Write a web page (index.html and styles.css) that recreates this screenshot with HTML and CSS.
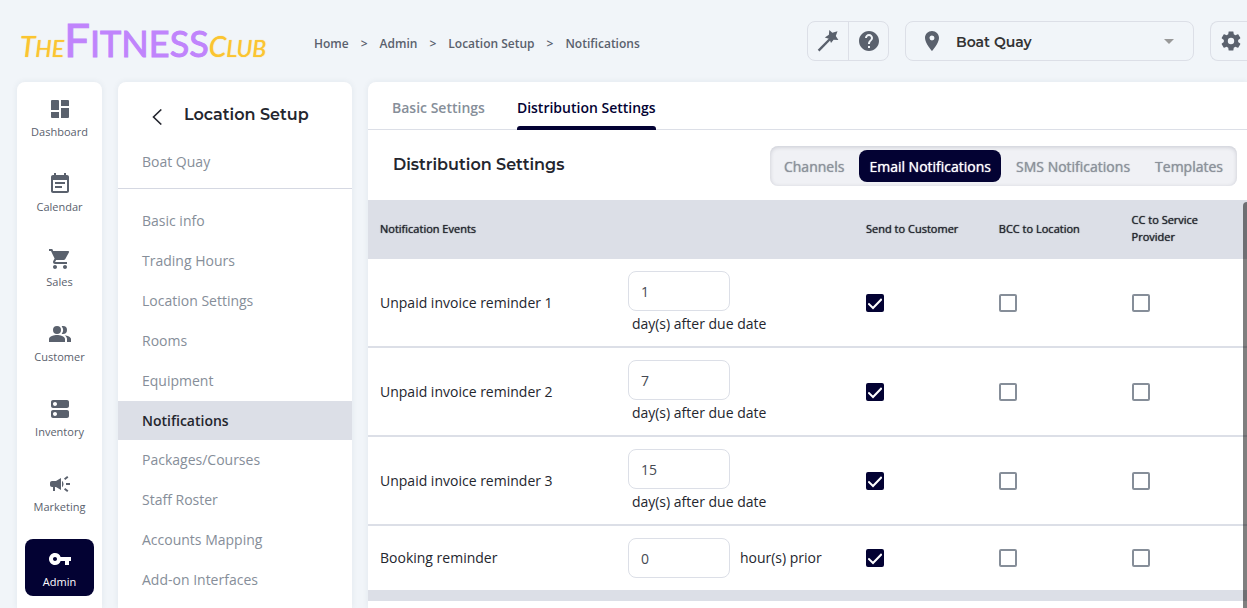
FILE: index.html
```html
<!DOCTYPE html>
<html lang="en">
<head>
<meta charset="utf-8">
<meta name="viewport" content="width=device-width, initial-scale=1">
<title>Distribution Settings</title>
<link rel="stylesheet" href="styles.css">
</head>
<body>
<header class="topbar">
  <a class="logo" href="#" aria-label="The Fitness Club"><i><span class="cap">T</span>HE</i><b><span class="cap">F</span>ITNESS</b><i><span class="cap">C</span>LUB</i></a>
  <nav class="crumbs" aria-label="Breadcrumb">
    <a href="#">Home</a><span>&gt;</span><a href="#">Admin</a><span>&gt;</span><a href="#">Location Setup</a><span>&gt;</span><a href="#">Notifications</a>
  </nav>
  <div class="tools">
    <div class="tool-group">
      <button type="button" aria-label="Quick setup"><svg width="22" height="22" viewBox="0 0 22 22"><path d="M1.600 20.600 13 9" stroke="currentColor" stroke-width="2.400"/><path d="m12.300 0 3 2.700 5.200-1.500-1.700 4.800 2.600 3.900-4.800-.1-2.600 3.200-1.500-4-4.700-1.500 4.100-2.700z" fill="currentColor"/></svg></button>
      <button type="button" aria-label="Help"><svg width="24" height="24" viewBox="0 0 24 24"><path fill="currentColor" d="M12 2C6.480 2 2 6.480 2 12s4.480 10 10 10 10-4.480 10-10S17.520 2 12 2zm1 17h-2v-2h2v2zm2.070-7.750-.9.920C13.450 12.900 13 13.500 13 15h-2v-.5c0-1.100.45-2.100 1.170-2.830l1.240-1.260c.37-.36.59-.86.59-1.410 0-1.100-.9-2-2-2s-2 .9-2 2H8c0-2.210 1.790-4 4-4s4 1.790 4 4c0 .88-.36 1.680-.93 2.250z"/></svg></button>
    </div>
    <label class="location">
      <svg width="24" height="24" viewBox="0 0 24 24"><path fill="currentColor" d="M12 2C8.130 2 5 5.130 5 9c0 5.250 7 13 7 13s7-7.750 7-13c0-3.870-3.130-7-7-7zm0 9.500a2.500 2.500 0 0 1 0-5 2.500 2.500 0 0 1 0 5z"/></svg>
      <select aria-label="Location"><option>Boat Quay</option></select>
      <svg class="caret" width="10" height="5" viewBox="0 0 10 5"><path fill="currentColor" d="M0 0h10L5 5z"/></svg>
    </label>
    <button type="button" class="gear" aria-label="Settings"><svg width="24" height="24" viewBox="0 0 24 24"><path fill="currentColor" d="M19.140 12.940c.04-.3.060-.61.060-.94 0-.32-.02-.64-.07-.94l2.030-1.580c.18-.14.23-.41.12-.61l-1.920-3.320c-.12-.22-.37-.29-.59-.22l-2.390.96c-.5-.38-1.030-.7-1.620-.94L14.400 2.810c-.04-.24-.24-.41-.48-.41h-3.840c-.24 0-.43.17-.47.41L9.250 5.350c-.59.24-1.130.57-1.620.94L5.240 5.330c-.22-.08-.47 0-.59.22L2.740 8.870c-.12.21-.08.47.12.61l2.030 1.580c-.05.3-.09.63-.09.94s.02.64.07.94l-2.030 1.580c-.18.14-.23.41-.12.61l1.920 3.320c.12.22.37.29.59.22l2.390-.96c.5.38 1.030.7 1.620.94l.36 2.540c.05.24.24.41.48.41h3.840c.24 0 .44-.17.47-.41l.36-2.540c.59-.24 1.130-.56 1.620-.94l2.390.96c.22.08.47 0 .59-.22l1.920-3.320c.12-.22.070-.47-.12-.61l-2.010-1.580zM12 15.200a3.200 3.200 0 1 1 0-6.400 3.200 3.200 0 0 1 0 6.400z"/></svg></button>
  </div>
</header>

<div class="layout">
  <nav class="rail" aria-label="Main">
    <a href="#"><svg viewBox="0 0 24 24"><path d="M4 3h6a1 1 0 0 1 1 1v9H3V4a1 1 0 0 1 1-1zM3 15h8v6H4a1 1 0 0 1-1-1zM13 11h8v9a1 1 0 0 1-1 1h-7zM13 3h7a1 1 0 0 1 1 1v5h-8z"/></svg>Dashboard</a>
    <a href="#"><svg viewBox="0 0 24 24"><path d="M17 10H7v2h10v-2zm2-7h-1V1h-2v2H8V1H6v2H5c-1.110 0-1.990.9-1.990 2L3 19c0 1.100.89 2 2 2h14c1.100 0 2-.9 2-2V5c0-1.100-.9-2-2-2zm0 16H5V8h14v11zm-5-5H7v2h7v-2z"/></svg>Calendar</a>
    <a href="#"><svg viewBox="0 0 24 24"><path d="M7 18c-1.100 0-1.990.9-1.990 2S5.900 22 7 22s2-.9 2-2-.9-2-2-2zM1 2v2h2l3.600 7.590-1.350 2.450c-.16.28-.25.610-.25.960 0 1.100.9 2 2 2h12v-2H7.420c-.14 0-.25-.11-.25-.25l.03-.12.9-1.630h7.450c.75 0 1.410-.41 1.750-1.030l3.580-6.490A1 1 0 0 0 20 4H5.210l-.94-2H1zm16 16c-1.100 0-1.990.9-1.990 2s.89 2 1.990 2 2-.9 2-2-.9-2-2-2z"/></svg>Sales</a>
    <a href="#"><svg viewBox="0 0 24 24"><path d="M16.670 13.130C18.040 14.060 19 15.320 19 17v3h4v-3c0-2.180-3.570-3.470-6.330-3.870zM9 4a4 4 0 1 1 0 8 4 4 0 0 1 0-8zM15 12a4 4 0 0 0 0-8c-.47 0-.91.1-1.330.24a5.980 5.980 0 0 1 0 7.520c.42.14.86.24 1.330.24zM9 13c-2.670 0-8 1.340-8 4v3h16v-3c0-2.660-5.330-4-8-4z"/></svg>Customer</a>
    <a href="#"><svg viewBox="0 0 24 24"><path d="M19 13H5c-1.100 0-2 .9-2 2v4c0 1.100.9 2 2 2h14c1.100 0 2-.9 2-2v-4c0-1.100-.9-2-2-2zM7 19c-1.100 0-2-.9-2-2s.9-2 2-2 2 .9 2 2-.9 2-2 2zM19 3H5c-1.100 0-2 .9-2 2v4c0 1.100.9 2 2 2h14c1.100 0 2-.9 2-2V5c0-1.100-.9-2-2-2zM7 9c-1.100 0-2-.9-2-2s.9-2 2-2 2 .9 2 2-.9 2-2 2z"/></svg>Inventory</a>
    <a href="#"><svg viewBox="0 0 24 24"><path d="M18 11v2h4v-2h-4zm-2 6.610c.96.71 2.210 1.650 3.200 2.390.4-.53.8-1.070 1.200-1.600-.99-.74-2.240-1.680-3.200-2.400-.4.540-.8 1.080-1.200 1.610zM20.400 5.600c-.4-.53-.8-1.070-1.200-1.600-.99.74-2.240 1.680-3.200 2.400.4.530.8 1.070 1.200 1.600.96-.72 2.210-1.650 3.200-2.400zM4 9c-1.100 0-2 .9-2 2v2c0 1.100.9 2 2 2h1v4h2v-4h1l5 3V6L8 9H4zm11.500 3c0-1.330-.58-2.530-1.500-3.350v6.690c.92-.81 1.500-2.010 1.500-3.340z"/></svg>Marketing</a>
    <a href="#" class="active" aria-current="page"><svg viewBox="0 0 24 24"><path d="M12.650 10A5.990 5.990 0 0 0 7 6c-3.310 0-6 2.690-6 6s2.690 6 6 6a5.990 5.990 0 0 0 5.650-4H17v4h4v-4h2v-4H12.650zM7 14c-1.100 0-2-.9-2-2s.9-2 2-2 2 .9 2 2-.9 2-2 2z"/></svg>Admin</a>
  </nav>

  <aside class="side">
    <div class="side-head">
      <a class="back" href="#" aria-label="Back"><svg width="10" height="16" viewBox="0 0 10 16"><path d="M9.300.5 1.500 8l7.800 7.500" fill="none" stroke="currentColor" stroke-width="1.600"/></svg></a>
      <h2>Location Setup</h2>
      <p>Boat Quay</p>
    </div>
    <nav class="side-nav" aria-label="Location Setup">
      <a href="#">Basic info</a>
      <a href="#">Trading Hours</a>
      <a href="#">Location Settings</a>
      <a href="#">Rooms</a>
      <a href="#">Equipment</a>
      <a href="#" class="active" aria-current="page">Notifications</a>
      <a href="#">Packages/Courses</a>
      <a href="#">Staff Roster</a>
      <a href="#">Accounts Mapping</a>
      <a href="#">Add-on Interfaces</a>
    </nav>
  </aside>

  <main class="panel">
    <nav class="tabs" aria-label="Settings">
      <a href="#">Basic Settings</a>
      <a href="#" class="active" aria-current="page">Distribution Settings</a>
    </nav>
    <div class="panel-head">
      <h1>Distribution Settings</h1>
      <div class="segments">
        <button type="button">Channels</button>
        <button type="button" class="active">Email Notifications</button>
        <button type="button">SMS Notifications</button>
        <button type="button">Templates</button>
      </div>
    </div>
    <div class="scroller">
      <table>
        <colgroup><col class="c-event"><col class="c-timing"><col class="c-check"><col class="c-check"><col></colgroup>
        <thead>
          <tr><th scope="col" colspan="2">Notification Events</th><th scope="col">Send to Customer</th><th scope="col">BCC to Location</th><th scope="col"><span class="narrow">CC to Service Provider</span></th></tr>
        </thead>
        <tbody>
          <tr>
            <td>Unpaid invoice reminder 1</td>
            <td><label class="timing stacked"><input type="text" value="1"><span>day(s) after due date</span></label></td>
            <td><input type="checkbox" aria-label="Send to Customer" checked></td>
            <td><input type="checkbox" aria-label="BCC to Location"></td>
            <td><input type="checkbox" aria-label="CC to Service Provider"></td>
          </tr>
          <tr>
            <td>Unpaid invoice reminder 2</td>
            <td><label class="timing stacked"><input type="text" value="7"><span>day(s) after due date</span></label></td>
            <td><input type="checkbox" aria-label="Send to Customer" checked></td>
            <td><input type="checkbox" aria-label="BCC to Location"></td>
            <td><input type="checkbox" aria-label="CC to Service Provider"></td>
          </tr>
          <tr>
            <td>Unpaid invoice reminder 3</td>
            <td><label class="timing stacked"><input type="text" value="15"><span>day(s) after due date</span></label></td>
            <td><input type="checkbox" aria-label="Send to Customer" checked></td>
            <td><input type="checkbox" aria-label="BCC to Location"></td>
            <td><input type="checkbox" aria-label="CC to Service Provider"></td>
          </tr>
          <tr class="group-end">
            <td>Booking reminder</td>
            <td><label class="timing"><input type="text" value="0"><span>hour(s) prior</span></label></td>
            <td><input type="checkbox" aria-label="Send to Customer" checked></td>
            <td><input type="checkbox" aria-label="BCC to Location"></td>
            <td><input type="checkbox" aria-label="CC to Service Provider"></td>
          </tr>
        </tbody>
      </table>
      <div class="thumb"></div>
    </div>
  </main>
</div>
</body>
</html>
```

FILE: styles.css
```css
:root {
  --navy: #030233;
  --ink: #24262e;
  --slate: #5a616d;
  --muted: #868e99;
  --line: #dcdfe7;
}

* { box-sizing: border-box; }

body {
  display: flex;
  flex-direction: column;
  height: 100vh;
  margin: 0;
  overflow: hidden;
  background: #f1f5f9;
  color: var(--ink);
  font: 14px/20px "Open Sans", sans-serif;
}

a { color: inherit; text-decoration: none; }
h1, h2, p { margin: 0; }
h1, h2 { font: 600 16px/24px Montserrat, Inter, sans-serif; }
button, input, select { font: inherit; color: inherit; }
button { border: 0; padding: 0; background: none; }

.topbar {
  display: flex;
  align-items: center;
  flex: none;
  height: 82px;
  padding-left: 20px;
}

.logo {
  width: 294px;
  margin-top: 6px;
  font: 36px/48px Lato, sans-serif;
  color: #c084fc;
  white-space: nowrap;
}
.logo b { font-weight: 400; -webkit-text-stroke: 1px currentColor; }
.logo b .cap { font-size: 46px; }
.logo i { font-size: 23px; color: #fbc531; text-shadow: 0 0 1px currentColor; }
.logo i .cap { font-size: 28px; }

.crumbs {
  display: flex;
  gap: 12px;
  margin-top: 5px;
  font-size: 12px;
  font-weight: 600;
  color: var(--slate);
}

.tools {
  display: flex;
  gap: 16px;
  margin-left: auto;
  color: var(--slate);
}
.tool-group, .location, .gear {
  display: flex;
  align-items: center;
  height: 40px;
  border: 1px solid var(--line);
  border-radius: 8px;
}
.tool-group button {
  display: flex;
  align-items: center;
  justify-content: center;
  width: 40px;
  height: 38px;
}
.tool-group button + button { border-left: 1px solid var(--line); }
.location {
  width: 289px;
  padding: 0 19px 0 14px;
}
.location select {
  flex: 1;
  height: 38px;
  padding: 2px 12px 0;
  border: 0;
  background: none;
  appearance: none;
  font: 600 14px/20px Montserrat, Inter, sans-serif;
  color: #333;
}
.caret { color: #999; }
.gear {
  width: 37px;
  padding-left: 8px;
  border-right: 0;
  border-radius: 8px 0 0 8px;
}

.layout {
  display: grid;
  grid-template-columns: 85px 234px 1fr;
  gap: 16px;
  flex: 1;
  min-height: 0;
  padding-left: 17px;
}
.rail, .side, .panel {
  border-radius: 8px 8px 0 0;
  background: #fff;
  box-shadow: 0 0 6px rgba(40, 60, 90, 0.08);
}
.panel { border-radius: 8px 0 0 0; }

.rail {
  display: flex;
  flex-direction: column;
  gap: 18px;
  padding: 7px 8px;
}
.rail a {
  display: flex;
  flex-direction: column;
  align-items: center;
  flex: none;
  height: 57px;
  padding-top: 8px;
  border-radius: 8px;
  font-size: 11px;
  line-height: 21px;
  color: var(--slate);
}
.rail svg { width: 24px; height: 24px; fill: currentColor; }
.rail .active { background: var(--navy); color: #fff; }

.side-head {
  display: grid;
  grid-template-columns: 42px 1fr;
  align-items: center;
  row-gap: 25px;
  padding: 21px 24px 16px;
  border-bottom: 1px solid #d5d8e2;
}
.back { display: flex; padding: 4px 0 0 10px; }
.side-head p { grid-column: 1 / -1; color: var(--muted); }
.side-nav { padding-top: 12px; }
.side-nav a {
  display: block;
  padding: 10px 24px;
  color: var(--muted);
}
.side-nav .active {
  padding-bottom: 9px;
  background: var(--line);
  font-weight: 600;
  color: var(--ink);
}

.tabs {
  display: flex;
  gap: 32px;
  height: 48px;
  padding: 0 24px;
  border-bottom: 1px solid var(--line);
  font-weight: 600;
  color: var(--muted);
}
.panel { display: flex; flex-direction: column; min-width: 0; }
.tabs, .panel-head { flex: none; }
.tabs a {
  display: flex;
  flex-direction: column;
  justify-content: space-between;
  height: 48px;
  padding-top: 16px;
}
.tabs .active { color: var(--navy); }
.tabs .active::after {
  content: "";
  height: 4px;
  border-radius: 3px 3px 0 0;
  background: var(--navy);
}
.panel-head {
  display: flex;
  align-items: center;
  justify-content: space-between;
  height: 70px;
  padding: 0 10px 0 25px;
}
.segments {
  display: flex;
  gap: 5px;
  margin-top: 2px;
  padding: 4px;
  border-radius: 8px;
  background: #f0f1f5;
  box-shadow: inset 0 1px 4px rgba(40, 45, 70, 0.2);
}
.segments button {
  height: 32px;
  padding: 2px 10px 0;
  border-radius: 8px;
  color: #8c929b;
  text-shadow: 0 0 1px currentColor;
}
.segments .active { background: var(--navy); color: #fff; }

.scroller { position: relative; flex: 1; min-height: 0; overflow: hidden; }
.thumb {
  position: absolute;
  top: 2px;
  right: 0;
  bottom: 0;
  width: 4px;
  border-radius: 4px 0 0 0;
  background: rgba(0, 0, 0, 0.5);
}

table { width: 100%; border-collapse: collapse; table-layout: fixed; }
.c-event { width: 28.2%; }
.c-timing { width: 27.1%; }
.c-check { width: 15.1%; }
th {
  height: 59px;
  padding: 0 12px 3px;
  background: var(--line);
  font-size: 11px;
  font-weight: 400;
  line-height: 17px;
  text-align: left;
  text-shadow: 0 0 1px currentColor;
}
.narrow { display: block; max-width: 80px; }
td { padding: 9px 0 9px 12px; border-bottom: 2px solid var(--line); }
.group-end td { padding: 12px 0 12px 12px; border-bottom-width: 11px; }

.timing { display: flex; align-items: center; gap: 10px; }
.stacked { flex-direction: column; align-items: flex-start; gap: 0; padding-top: 3px; }
.stacked span { padding-left: 4px; line-height: 26px; }
.timing input {
  width: 102px;
  height: 40px;
  padding: 0 12px;
  border: 1px solid var(--line);
  border-radius: 8px;
  background: #fff;
  color: #464a53;
}

input[type="checkbox"] {
  display: block;
  width: 18px;
  height: 18px;
  margin: 0;
  border: 2px solid var(--muted);
  border-radius: 2px;
  appearance: none;
}
input[type="checkbox"]:checked {
  border-color: var(--navy);
  background: var(--navy) url("data:image/svg+xml,%3Csvg xmlns='http://www.w3.org/2000/svg' viewBox='0 0 14 14'%3E%3Cpath d='M.3 7.500 5 12 13.700 3' fill='none' stroke='white' stroke-width='2'/%3E%3C/svg%3E") center / 14px 14px no-repeat;
}
```
